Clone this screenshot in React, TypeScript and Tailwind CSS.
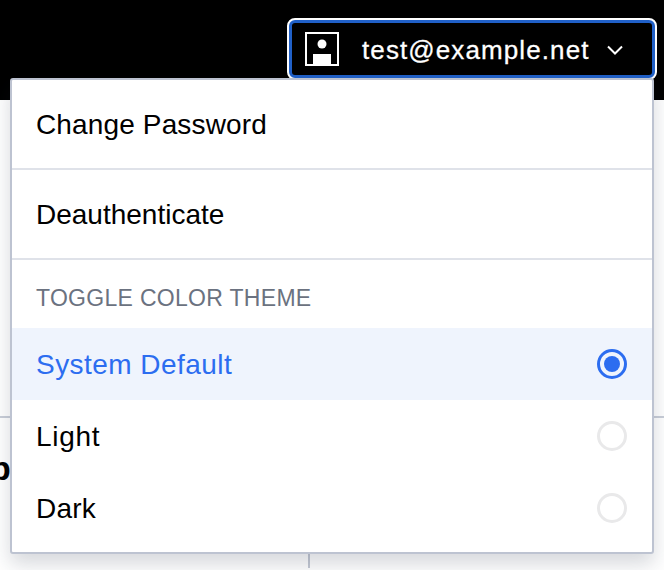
function Radio({ checked }: { checked?: boolean }) {
  if (checked) {
    return (
      <span className="flex h-[30px] w-[30px] items-center justify-center rounded-full border-[3px] border-[#2c6df0]">
        <span className="h-4 w-4 rounded-full bg-[#2c6df0]" />
      </span>
    );
  }
  return <span className="h-[30px] w-[30px] rounded-full border-[3px] border-[#e9e9ea] bg-white" />;
}

function UserIcon() {
  return (
    <svg width="34" height="34" viewBox="0 0 34 34" className="shrink-0">
      <rect x="1" y="1" width="32" height="32" fill="none" stroke="#fff" strokeWidth="2" />
      <circle cx="17" cy="12" r="4.5" fill="#fff" />
      <rect x="8" y="22" width="18" height="11" fill="#fff" />
    </svg>
  );
}

export default function App() {
  return (
    <div className="relative h-[570px] w-[664px] overflow-hidden bg-white font-['Liberation_Sans',sans-serif] text-black">
      <header className="flex h-[100px] items-start justify-end bg-black pt-[18px] pr-[7px]">
        <div className="flex h-[62px] w-[370px] items-center rounded-lg border-2 border-white bg-white">
          <div className="flex h-full w-full items-center rounded-md border-[3px] border-[#2060c8] bg-black pl-[13px] text-white">
            <UserIcon />
            <span className="mt-[3px] ml-[23px] text-[26px] font-medium tracking-[1.1px] [-webkit-text-stroke:0.3px_white]">test@example.net</span>
            <svg width="18" height="12" viewBox="0 0 18 12" className="mt-[1px] ml-4" fill="none" stroke="#fff" strokeWidth="2">
              <path d="M2 2.5l7 7 7-7" />
            </svg>
          </div>
        </div>
      </header>

      <div className="flex h-[318px] border-b-2 border-[#c9ced8]" />
      <div className="flex h-[150px]">
        <div className="h-[133px] w-[308px] shrink-0 overflow-hidden">
          <p className="mt-[30px] -ml-[10px] text-[34px] leading-[40px] font-bold">p</p>
        </div>
        <div className="h-full w-0.5 bg-[#c4c9d4]" />
      </div>

      <div className="absolute top-[78px] left-[10px] w-[644px] rounded-[3px] border-2 border-[#bdc3d1] bg-white pb-2 shadow-[0_10px_20px_rgba(30,40,60,0.18)]">
        <div className="flex h-[90px] items-center border-b-2 border-[#dfe2e9] pt-[2px] pl-[24px] text-[28px] tracking-[0.14px]">Change Password</div>
        <div className="flex h-[90px] items-center border-b-2 border-[#dfe2e9] pt-[2px] pl-[24px] text-[28px]">Deauthenticate</div>
        <div className="flex h-[68px] items-center px-[24px] pt-[8px] text-[23px] tracking-[0.3px] text-[#6b7280]">TOGGLE COLOR THEME</div>
        <div className="flex h-[72px] items-center justify-between bg-[#eff4fd] pr-[25px] pl-[24px] text-[28px] tracking-[0.45px] text-[#2c6df0]">
          <span className="mt-[2px]">System Default</span>
          <Radio checked />
        </div>
        <div className="flex h-[72px] items-center justify-between pr-[25px] pl-[24px] text-[28px]">
          <span className="mt-[2px] tracking-[0.7px]">Light</span>
          <Radio />
        </div>
        <div className="flex h-[72px] items-center justify-between pr-[25px] pl-[24px] text-[28px]">
          <span className="mt-[2px] tracking-[0.2px]">Dark</span>
          <Radio />
        </div>
      </div>
    </div>
  );
}
